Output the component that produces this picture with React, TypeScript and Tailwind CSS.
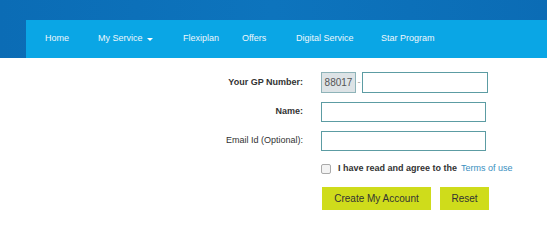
import React from "react";

export default function App() {
  return (
    <div className="w-[547px] h-[252px] bg-white overflow-hidden font-['Liberation_Sans',Arial,sans-serif]">
      {/* HEADER */}
      <div className="bg-gradient-to-r from-[#0b6cb5] via-[#0d74bd] to-[#0b6cb5] pt-[20px] pl-[26px]">
        <nav className="h-[38px] bg-[#0aa6e5] flex items-center pl-[19px] text-[9px] text-[#eef7fc]">
          <a className="w-[53px]">Home</a>
          <a className="w-[85px] flex items-center">
            My Service
            <span className="ml-[4px] inline-block w-0 h-0 border-l-[3px] border-r-[3px] border-t-[3px] border-l-transparent border-r-transparent border-t-white"></span>
          </a>
          <a className="w-[59px]">Flexiplan</a>
          <a className="w-[54px]">Offers</a>
          <a className="w-[85px]">Digital Service</a>
          <a>Star Program</a>
        </nav>
      </div>

      {/* FORM */}
      <div className="pt-[14px] pl-[200px] text-[9px]">
        <div className="flex flex-col gap-[8px]">
          <div className="flex items-center h-[21px]">
            <label className="w-[103px] text-right font-bold text-[#333]">Your GP Number:</label>
            <div className="ml-[18px] flex items-center">
              <span className="w-[35px] h-[21px] bg-[#dde3e6] border border-[#8eb3b8] text-[#555] flex items-center justify-center text-[10px]">88017</span>
              <span className="w-[6px] text-center text-[#999]">-</span>
              <input className="w-[126px] h-[21px] border border-[#5c9ca3] outline-none" />
            </div>
          </div>
          <div className="flex items-center h-[21px]">
            <label className="w-[103px] text-right font-bold text-[#333]">Name:</label>
            <input className="ml-[18px] w-[165px] h-[20px] border border-[#5c9ca3] outline-none" />
          </div>
          <div className="flex items-center h-[21px]">
            <label className="w-[103px] text-right text-[#333]">Email Id (Optional):</label>
            <input className="ml-[18px] w-[165px] h-[20px] border border-[#5c9ca3] outline-none" />
          </div>
        </div>

        <div className="mt-[11px] ml-[121px] flex items-center h-[14px] whitespace-nowrap">
          <span className="w-[10px] h-[10px] border border-[#aaa] rounded-[2px] bg-[#f3f3f3]"></span>
          <span className="ml-[7px] font-bold text-[#333]">I have read and agree to the</span>
          <a className="ml-[4px] text-[#3a8fc0]">Terms of use</a>
        </div>

        <div className="mt-[11px] ml-[122px] flex gap-[9px]">
          <button className="w-[109px] h-[23px] bg-[#cfdc1b] text-[#333] text-[10px]">Create My Account</button>
          <button className="w-[49px] h-[23px] bg-[#cfdc1b] text-[#333] text-[10px]">Reset</button>
        </div>
      </div>
    </div>
  );
}
